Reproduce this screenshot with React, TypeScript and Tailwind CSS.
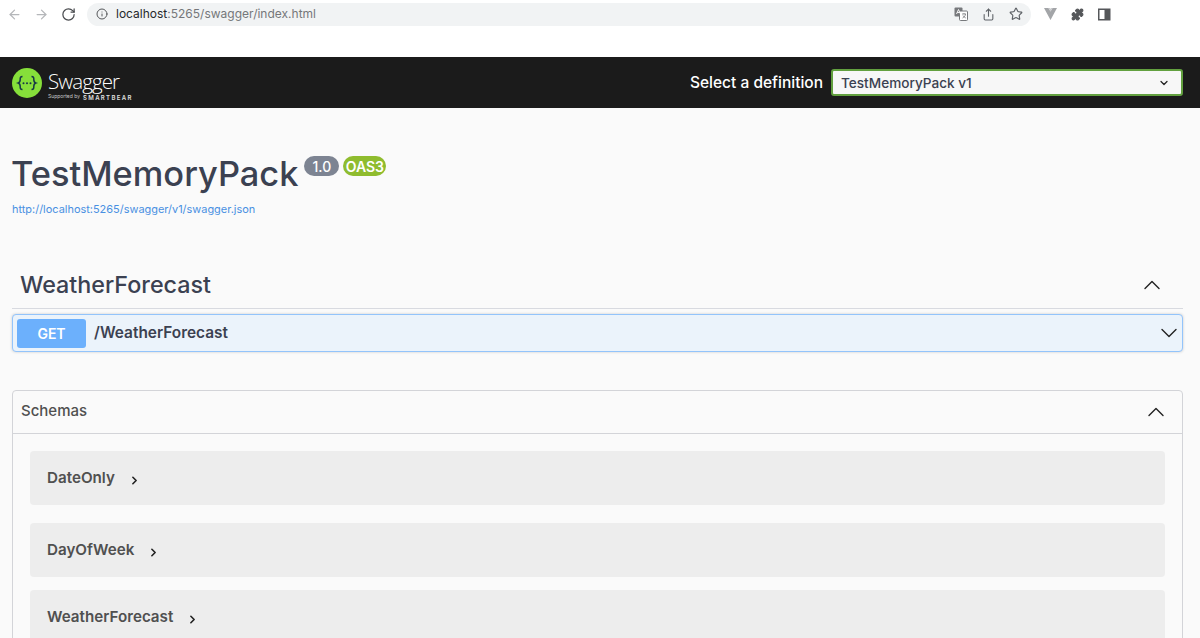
import { ArrowLeft, ArrowRight, RotateCw, Info, Share, Star, Puzzle, ChevronDown, ChevronUp, ChevronRight } from "lucide-react";

const schemas = [
  { name: "DateOnly", box: "h-[54px] mb-[18px]" },
  { name: "DayOfWeek", box: "h-[54px] mb-[13px]" },
  { name: "WeatherForecast", box: "h-[54px]" },
];

const App = () => {
  return (
    <div className="w-[1200px] h-[638px] overflow-hidden bg-[#fafafa] font-['Inter',sans-serif]">

      {/* browser toolbar */}
      <div className="h-[57px] bg-white">
        <div className="flex items-center h-[28px] pl-[7px] pr-[89px]">
          <ArrowLeft className="w-[15px] h-[15px] text-[#b5b7ba]" />
          <ArrowRight className="w-[15px] h-[15px] ml-[12px] text-[#b5b7ba]" />
          <RotateCw className="w-[15px] h-[15px] ml-[12px] text-[#4a4c50]" strokeWidth={2} />
          <div className="flex items-center w-[944px] h-[23px] ml-[11px] rounded-full bg-[#f1f3f4] pl-[9px] pr-[8px]">
            <Info className="w-[12px] h-[12px] text-[#55575a]" />
            <span className="ml-[8px] text-[12px] text-[#75777a]">
              <span className="text-[#26282b]">localhost</span>:5265/swagger/index.html
            </span>
            <div className="ml-auto flex items-center gap-[14px] text-[#5f6368]">
              <svg width="14" height="14" viewBox="0 0 14 14">
                <rect x="0.5" y="0.5" width="8" height="9" rx="1" fill="#77797c" />
                <rect x="5.5" y="4" width="8" height="9.5" rx="1" fill="#fff" stroke="#77797c" />
                <path d="M8 7h4M10 6v1M8.500 11c2-1 3-2.500 3-4M9 8.500c.7 1.200 1.500 2 2.800 2.500" fill="none" stroke="#77797c" strokeWidth="0.8" />
                <path d="M2.500 7l2-4.500 2 4.500M3.200 5.500h2.600" fill="none" stroke="#fff" strokeWidth="0.9" />
              </svg>
              <Share className="w-[13px] h-[13px]" />
              <Star className="w-[14px] h-[14px]" />
            </div>
          </div>
          <div className="ml-auto flex items-center gap-[14px]">
            <svg width="13" height="12" viewBox="0 0 13 12">
              <path d="M0 0h4.500l2 3.500 2-3.500H13L6.500 12z" fill="#a3a5a8" />
              <path d="M4.500 0l2 3.500 2-3.500h-1.500l-.5 1-.5-1z" fill="#c9cacc" />
            </svg>
            <Puzzle className="w-[13px] h-[13px] text-[#55575a] fill-[#55575a]" />
            <svg width="13" height="13" viewBox="0 0 13 13">
              <rect x="0.750" y="1.250" width="11" height="10.500" fill="none" stroke="#55575a" strokeWidth="1.500" />
              <rect x="6.500" y="1.250" width="5.500" height="10.500" fill="#55575a" />
            </svg>
          </div>
        </div>
      </div>

      {/* swagger topbar */}
      <div className="flex items-center h-[51px] bg-[#1b1b1b] pl-[12px] pr-[17px]">
        <svg width="30" height="30" viewBox="0 0 30 30" className="shrink-0">
          <circle cx="15" cy="15" r="15" fill="#86df3a" />
          <path d="M10.500 8.500c-2.500 0-2.300 1.500-2.300 3 0 1.800-.4 3-1.900 3.500 1.500.5 1.900 1.700 1.900 3.500 0 1.500-.2 3 2.300 3M19.500 8.500c2.500 0 2.300 1.500 2.300 3 0 1.800.4 3 1.900 3.500-1.500.5-1.900 1.700-1.900 3.500 0 1.500.2 3-2.300 3" fill="none" stroke="#173647" strokeWidth="1.500" />
          <circle cx="11.500" cy="15.200" r="1" fill="#173647" />
          <circle cx="15" cy="15.200" r="1" fill="#173647" />
          <circle cx="18.500" cy="15.200" r="1" fill="#173647" />
        </svg>
        <div className="ml-[6px] flex flex-col mt-[5px]">
          <span className="font-['Open_Sans',sans-serif] text-[20.5px] leading-[24px] font-light tracking-[-0.9px] text-white">Swagger</span>
          <span className="flex items-center h-[9px] text-[5px] text-[#c8c8c8]">
            Supported by<span className="ml-[3px] text-[6px] font-semibold tracking-[1.35px] text-[#e0e0e0]">SMARTBEAR</span>
          </span>
        </div>
        <span className="ml-auto mt-[1px] text-[15.5px] font-medium text-white">Select a definition</span>
        <div className="flex items-center w-[352px] h-[27px] ml-[8px] rounded-[3px] border-2 border-[#62a03f] bg-[#f7f7f7] pl-[8px] pr-[11px]">
          <span className="mt-[1px] text-[13.6px] font-medium text-[#3b4151]">TestMemoryPack v1</span>
          <ChevronDown className="ml-auto w-[12px] h-[12px] text-[#222]" strokeWidth={2.5} />
        </div>
      </div>

      {/* info */}
      <div className="pl-[12px] pt-[46px]">
        <div className="flex items-start h-[40px]">
          <h1 className="-ml-[1px] text-[34.4px] leading-[40px] font-medium text-[#3b4151]">TestMemoryPack</h1>
          <span className="ml-[6px] mt-[2px] flex items-center justify-center w-[35px] h-[20px] rounded-full bg-[#7d8492] text-[14px] font-medium text-white">1.0</span>
          <span className="ml-[4px] mt-[2px] flex items-center justify-center w-[43px] h-[20px] rounded-full bg-[#8fbc2e] text-[14px] font-semibold text-white">OAS3</span>
        </div>
        <a className="block mt-[8px] text-[10.95px] leading-[14px] text-[#4990e2]">http://localhost:5265/swagger/v1/swagger.json</a>
      </div>

      {/* operations */}
      <div className="mr-[17px] ml-[12px] mt-[46px]">
        <div className="flex items-center h-[47px] pl-[8px] pr-[17px] border-b border-[#d8dae0]">
          <h2 className="text-[23.3px] font-medium text-[#3b4151]">WeatherForecast</h2>
          <ChevronUp className="ml-auto w-[28px] h-[28px] text-[#222]" strokeWidth={1.2} />
        </div>
        <div className="flex items-center h-[38px] mt-[5px] pl-[4px] pr-0 rounded-[4px] border border-[#93c4fb] bg-[#ebf3fb] shadow-[0_0_3px_rgba(0,0,0,0.19)]">
          <span className="flex items-center justify-center w-[69px] h-[29px] rounded-[3px] bg-[#6cb0fc] text-[14px] font-semibold text-white">GET</span>
          <span className="ml-[8px] text-[15.4px] font-semibold text-[#3b4151]">/WeatherForecast</span>
          <ChevronDown className="ml-auto mr-[-1px] w-[28px] h-[28px] text-[#222]" strokeWidth={1.2} />
        </div>

        {/* schemas */}
        <div className="mt-[38px] h-[260px] rounded-t-[4px] border border-[#d3d4d8] overflow-hidden">
          <div className="flex items-center h-[43px] pl-[8px] pr-[12px] border-b border-[#d3d4d8]">
            <span className="mb-[2px] text-[15px] font-medium text-[#505050]">Schemas</span>
            <ChevronUp className="ml-auto w-[28px] h-[28px] text-[#222]" strokeWidth={1.2} />
          </div>
          <div className="pt-[17px] px-[17px]">
            {schemas.map((s) => (
              <div key={s.name} className={`flex items-center rounded-[4px] bg-[#ededed] pl-[17px] ${s.box}`}>
                <span className="mt-[1px] text-[15.2px] font-semibold text-[#505050]">{s.name}</span>
                <ChevronRight className="w-[13px] h-[13px] mt-[4px] ml-[13px] text-[#222]" strokeWidth={3} />
              </div>
            ))}
          </div>
        </div>
      </div>
    </div>
  );
};

export default App;
